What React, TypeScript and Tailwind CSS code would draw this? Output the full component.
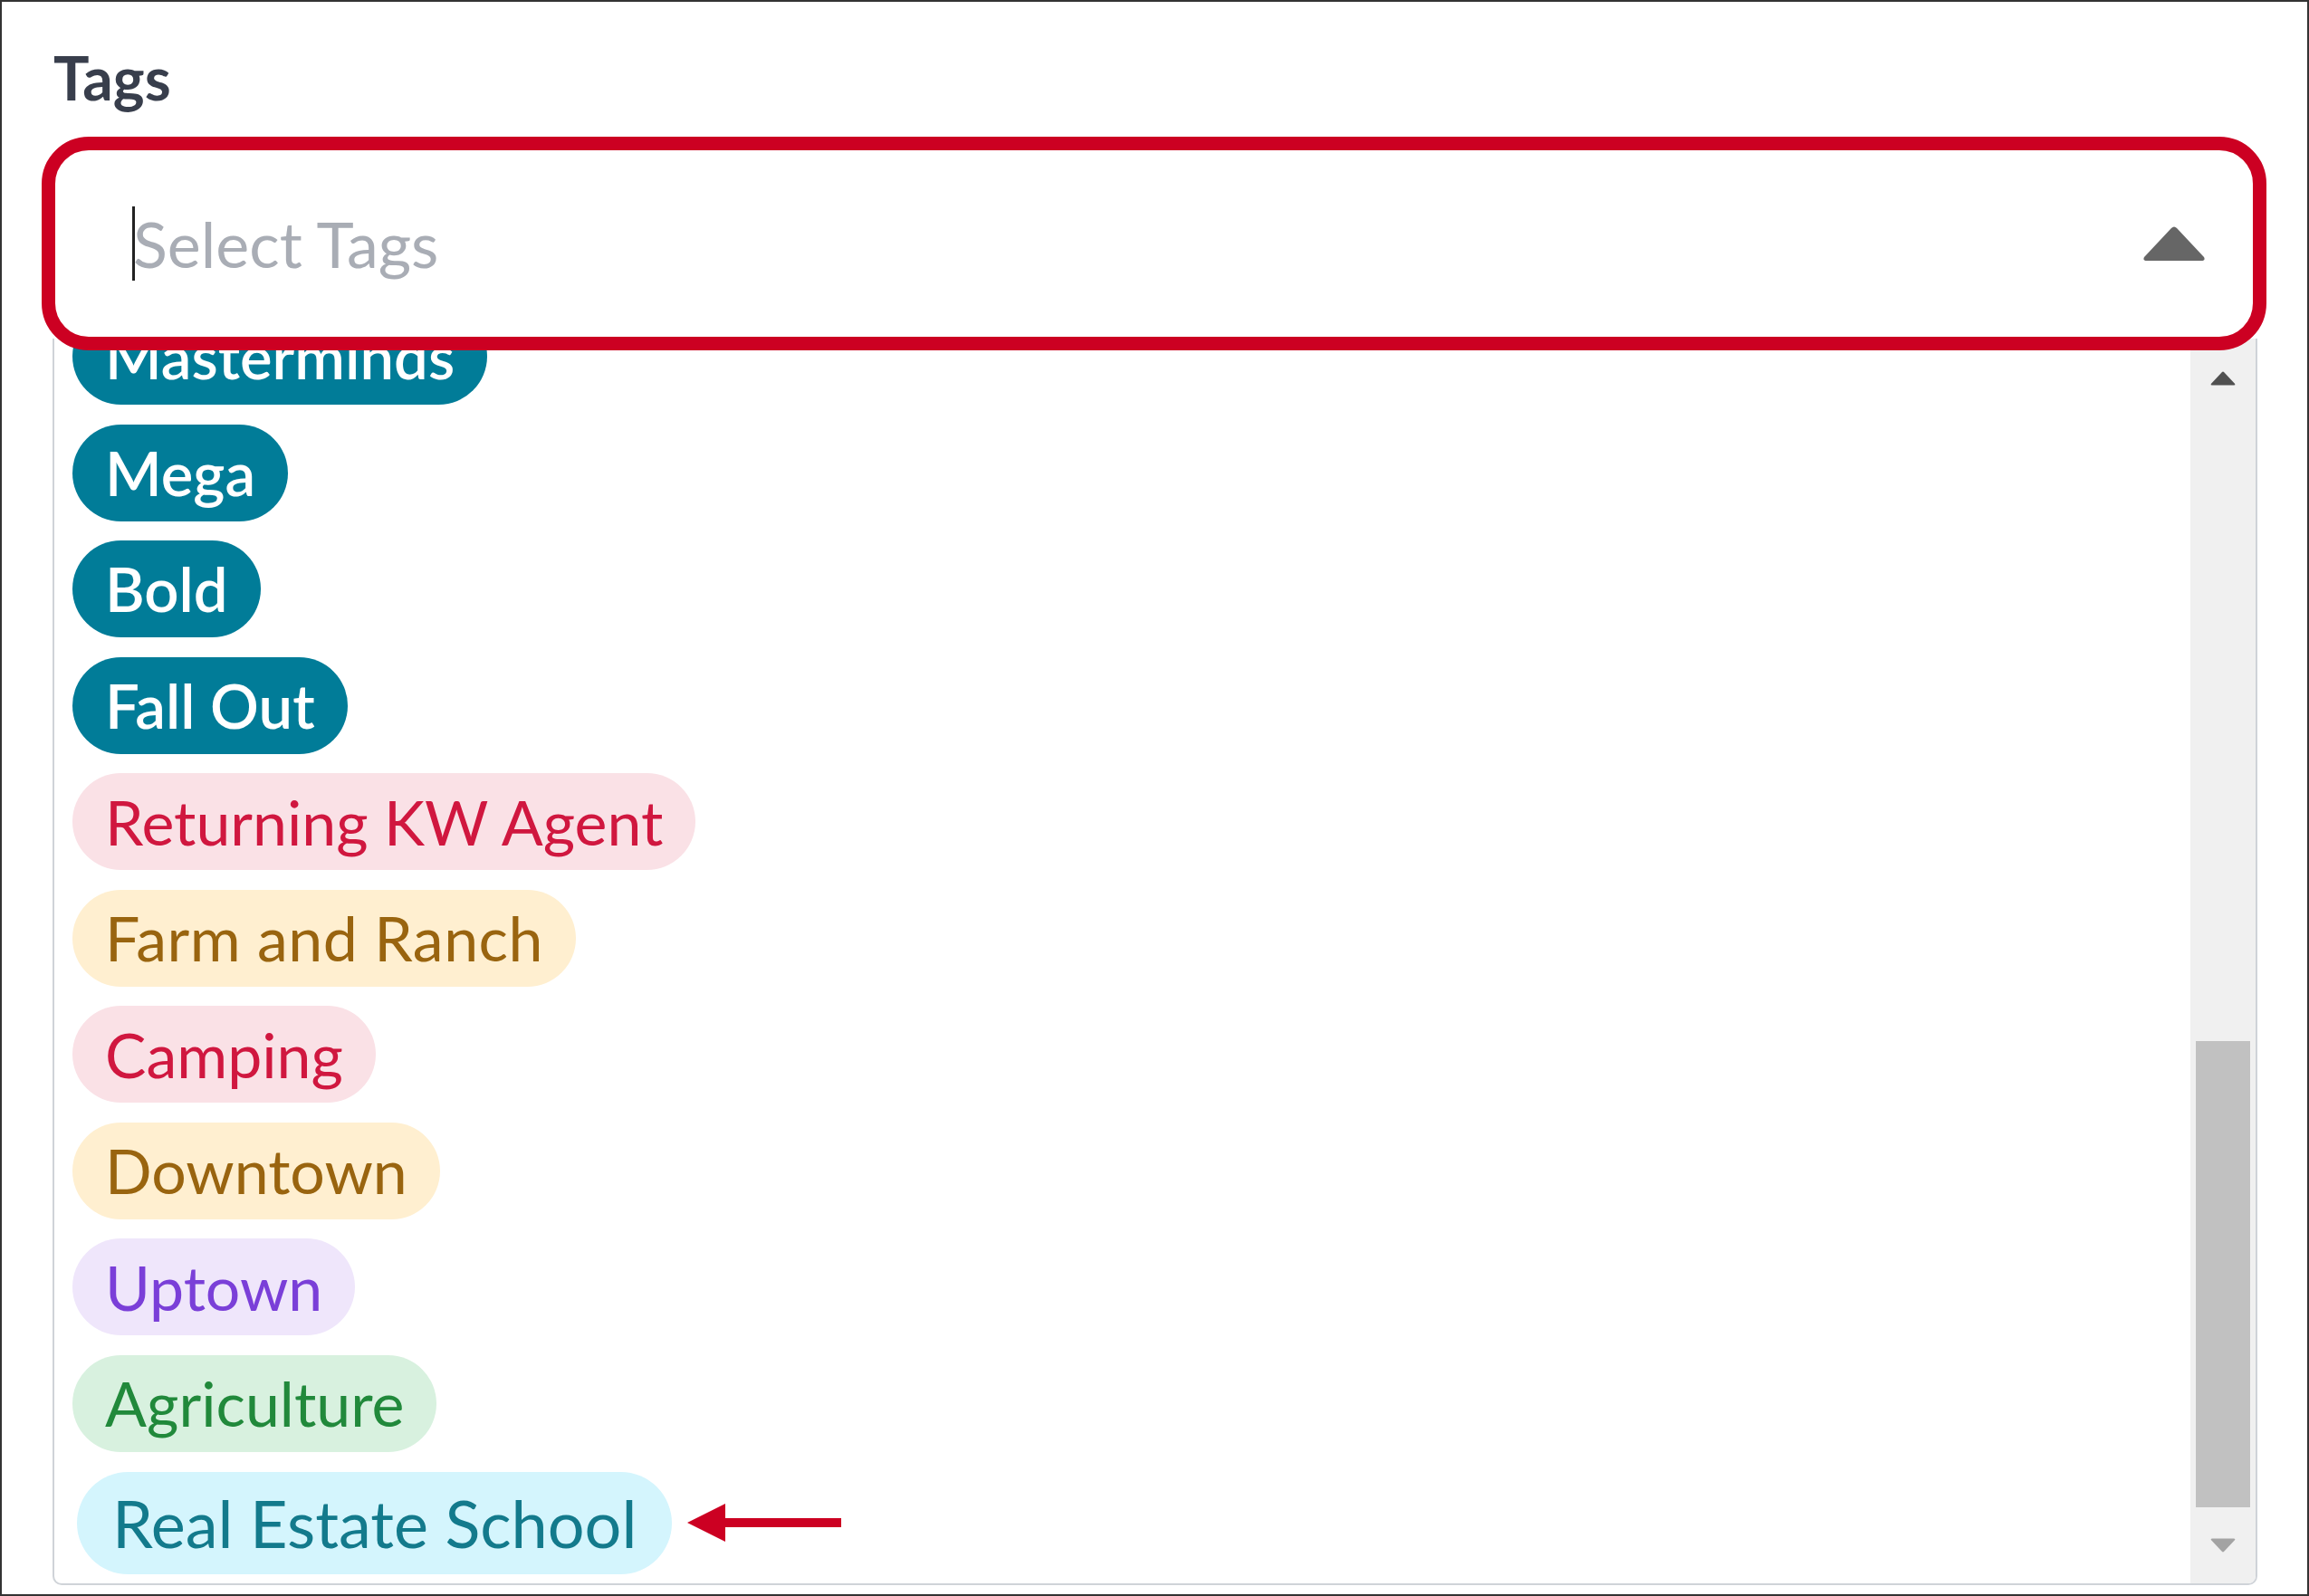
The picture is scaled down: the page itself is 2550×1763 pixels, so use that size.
const tags = [
  { label: 'Masterminds', cls: 'bg-[#017c98] text-white font-semibold text-[67px]' },
  { label: 'Mega', cls: 'bg-[#017c98] text-white font-semibold text-[67px]' },
  { label: 'Bold', cls: 'bg-[#017c98] text-white font-semibold text-[67px]' },
  { label: 'Fall Out', cls: 'bg-[#017c98] text-white font-semibold text-[67px]' },
  { label: 'Returning KW Agent', cls: 'bg-[#fae1e6] text-[#d0173f] text-[68px]' },
  { label: 'Farm and Ranch', cls: 'bg-[#ffefd0] text-[#99640f] text-[68px] tracking-[0.5px]' },
  { label: 'Camping', cls: 'bg-[#fae1e6] text-[#d0173f] text-[68px]' },
  { label: 'Downtown', cls: 'bg-[#ffefd0] text-[#99640f] text-[68px]' },
  { label: 'Uptown', cls: 'bg-[#efe6fb] text-[#7a3fd8] text-[68px]' },
  { label: 'Agriculture', cls: 'bg-[#d8f1df] text-[#21893b] text-[68px]' },
];

function Caret({ className }: { className: string }) {
  return (
    <svg viewBox="0 0 70 40" className={className}>
      <path d="M32 3 Q35 0 38 3 L68 35 Q70 39 65 39 L5 39 Q0 39 2 35 Z" fill="currentColor" />
    </svg>
  );
}

export default function App() {
  return (
    <div
      className="w-[2550px] h-[1763px] bg-white border-2 border-[#333] pl-[44px] pr-[45px] pt-[51px] overflow-hidden"
      style={{ fontFamily: 'Lato, "Noto Sans", sans-serif' }}
    >
      {/* Label */}
      <div className="pl-[13px] text-[66px] leading-none font-bold text-[#383e4c] h-[66px]">Tags</div>

      {/* Select input (annotated) */}
      <div className="relative z-10 mt-[32px] h-[236px] border-[15px] border-[#cc0022] rounded-[52px] bg-white flex items-center pl-[85px] pr-[52px]">
        <div className="flex items-center flex-1">
          <div className="w-[3px] h-[82px] bg-[#222]" />
          <span className="text-[70px] leading-none text-[#a9adb5] -ml-[2px]">Select Tags</span>
        </div>
        <Caret className="w-[70px] h-[40px] text-[#666]" />
      </div>

      {/* Dropdown list */}
      <div className="-mt-[13px] ml-[12px] w-[2435px] h-[1377px] border-2 border-t-0 border-[#cfd3d8] rounded-b-[10px] flex overflow-hidden">
        <div className="flex-1 overflow-hidden pl-[20px]">
          <div className="-mt-[34px] flex flex-col items-start gap-[21.5px]">
            {tags.map((t) => (
              <div
                key={t.label}
                className={`h-[107px] px-[36px] rounded-full flex items-center leading-none ${t.cls}`}
              >
                {t.label}
              </div>
            ))}
            <div className="flex items-center gap-[17px] mt-[0.5px]">
              <div className="ml-[5px] h-[113px] px-[39px] rounded-full flex items-center text-[72px] leading-none bg-[#d4f5fd] text-[#137a8c]">
                Real Estate School
              </div>
              <svg viewBox="0 0 170 42" className="w-[170px] h-[42px]">
                <path d="M0 21 L42 0 L42 16 L170 16 L170 26 L42 26 L42 42 Z" fill="#cc0022" />
              </svg>
            </div>
          </div>
        </div>

        {/* Scrollbar */}
        <div className="w-[72px] bg-[#f0f0f0] flex flex-col">
          <div className="h-[88px] flex items-center justify-center">
            <Caret className="w-[34px] h-[16px] text-[#505050]" />
          </div>
          <div className="flex-1">
            <div className="mt-[688px] mx-auto w-[60px] h-[515px] bg-[#c1c1c1]" />
          </div>
          <div className="h-[84px] flex items-center justify-center">
            <Caret className="w-[34px] h-[16px] text-[#a3a3a3] rotate-180" />
          </div>
        </div>
      </div>
    </div>
  );
}
